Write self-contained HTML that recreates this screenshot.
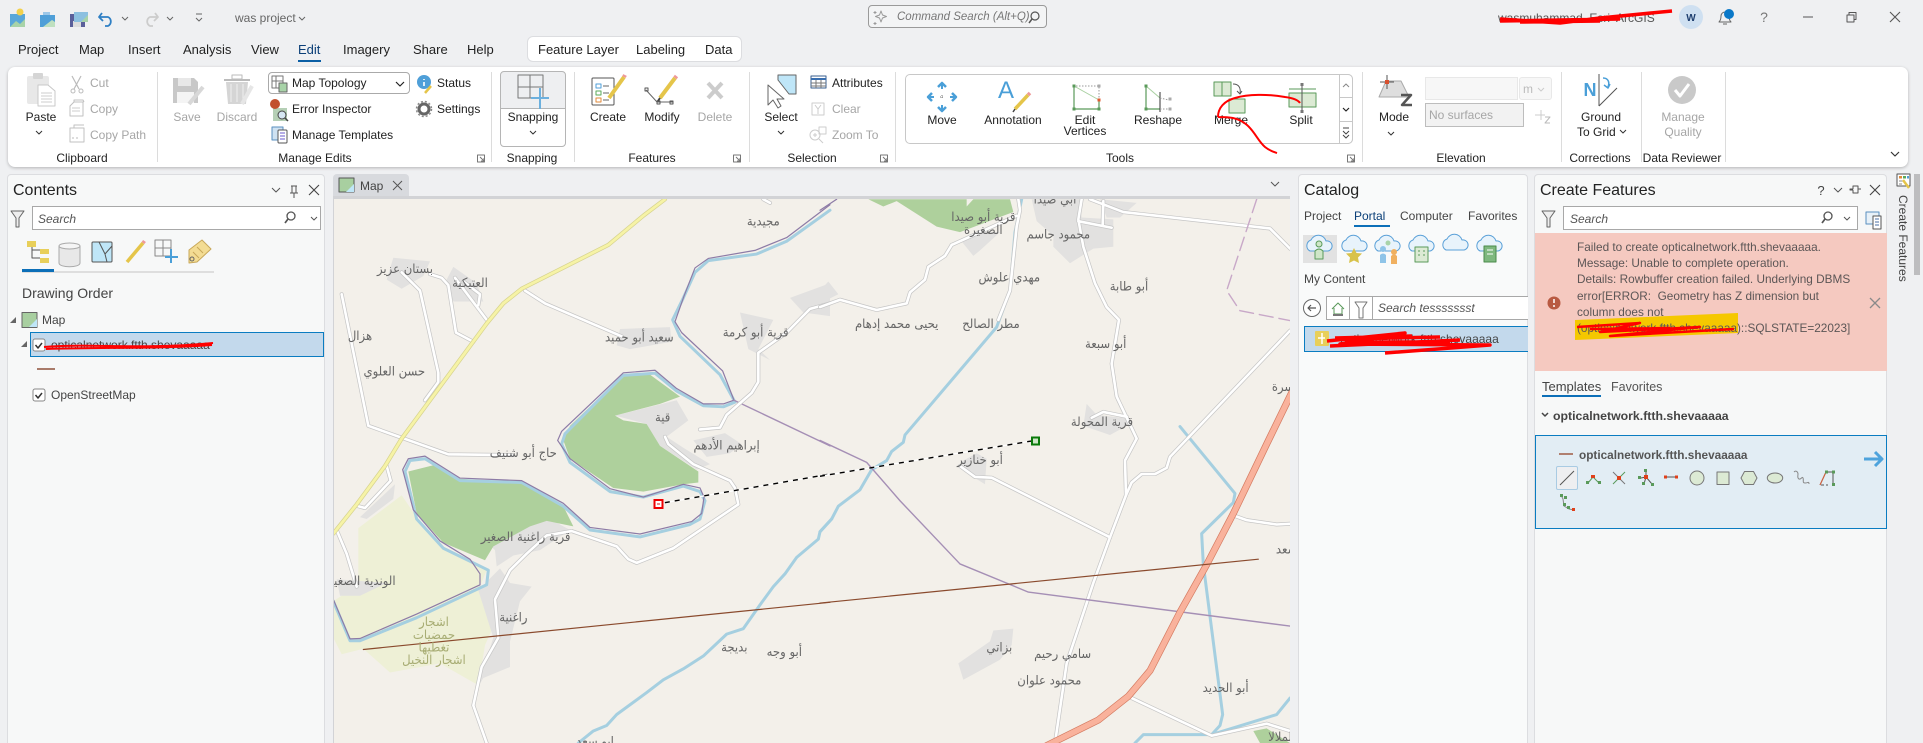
<!DOCTYPE html>
<html><head><meta charset="utf-8"><style>
html,body{margin:0;padding:0;width:1923px;height:743px;overflow:hidden;background:#eff0f2;font-family:"Liberation Sans",sans-serif;font-size:12px;color:#222}
.a{position:absolute;box-sizing:border-box}
.t{position:absolute;line-height:16px;height:16px;white-space:nowrap}
.c{transform:translateX(-50%)}
.g{color:#a6a6a6}
.m{font-size:13px}
.i{font-style:italic;color:#555}
.h{font-size:16px;line-height:20px;height:20px}
.p{position:absolute;box-sizing:border-box;background:#f7f8f8;border:1px solid #dcdde0;border-radius:4px 4px 0 0;border-bottom:0}
.s{position:absolute;width:1px;top:72px;height:90px;background:#dcdcdc}
#map path{vector-effect:non-scaling-stroke;stroke-linejoin:round;stroke-linecap:round}
.lb{font-family:"DejaVu Sans",sans-serif;font-size:35px;fill:#666;text-anchor:middle}
.lg{fill:#a8ad74}
</style></head><body>
<!-- ribbon -->
<div class="a" style="left:8px;top:67px;width:1900px;height:100px;background:#fff;border-radius:7px;box-shadow:0 1px 3px rgba(0,0,0,.25)"></div>
<div class="a" style="left:527px;top:36px;width:215px;height:26px;background:#fff;border:1px solid #dcdde0;border-radius:6px"></div>
<div class="a" style="left:298px;top:60px;width:23px;height:2px;background:#0b5fa5"></div>
<div class="s" style="left:157px"></div><div class="s" style="left:491px"></div><div class="s" style="left:574px"></div><div class="s" style="left:749px"></div><div class="s" style="left:895px"></div><div class="s" style="left:1362px"></div><div class="s" style="left:1561px"></div><div class="s" style="left:1641px"></div><div class="s" style="left:1725px"></div>
<div class="a" style="left:268px;top:72px;width:142px;height:22px;border:1px solid #aaa;border-radius:4px;background:#fff"></div>
<div class="a" style="left:500px;top:71px;width:66px;height:76px;border:1px solid #b5b5b5;border-radius:4px;background:linear-gradient(#eeeff1 0,#eeeff1 36px,#b5b5b5 36px,#b5b5b5 37px,#fff 37px)"></div>
<div class="a" style="left:905px;top:74px;width:448px;height:70px;border:1px solid #c8c8c8;border-radius:5px;background:#fff"></div>
<div class="a" style="left:1339px;top:74px;width:14px;height:70px;border:1px solid #c8c8c8;border-radius:0 5px 5px 0;background:linear-gradient(#fff 22px,#c8c8c8 22px,#c8c8c8 23px,#fff 23px,#fff 46px,#c8c8c8 46px,#c8c8c8 47px,#fff 47px)"></div>
<div class="a" style="left:1425px;top:77px;width:93px;height:23px;background:#f7f7f7;border:1px solid #e8e8e8"></div>
<div class="a" style="left:1519px;top:77px;width:33px;height:23px;background:#f7f7f7;border:1px solid #e8e8e8;border-radius:3px"></div>
<div class="a" style="left:1425px;top:103px;width:99px;height:24px;background:#f2f2f2;border:1px solid #bdbdbd"></div>
<div class="a" style="left:868px;top:5px;width:179px;height:23px;border:1px solid #9a9a9a;border-radius:4px;background:#f3f4f5"></div>
<!-- panels -->
<div class="p" style="left:7px;top:174px;width:318px;height:569px"></div>
<div class="p" style="left:1298px;top:174px;width:230px;height:569px;background:#f9fafa"></div>
<div class="p" style="left:1534px;top:174px;width:353px;height:569px"></div>
<div class="a" style="left:32px;top:206px;width:289px;height:24px;background:#fff;border:1px solid #a8a8a8"></div>
<div class="a" style="left:22px;top:271px;width:192px;height:2px;background:#dedede"></div>
<div class="a" style="left:22px;top:269px;width:32px;height:3px;background:#0c6fb8"></div>
<div class="a" style="left:30px;top:332px;width:294px;height:25px;background:#c3d9ec;border:1px solid #0a7cc1"></div>
<div class="a" style="left:37px;top:368px;width:18px;height:2px;background:#a97b6a"></div>
<!-- map tab -->
<div class="a" style="left:333px;top:174px;width:76px;height:22px;background:#d8dade;border-radius:4px 4px 0 0"></div>
<div class="a" style="left:333px;top:196px;width:957px;height:3px;background:#d2d3d6"></div>
<div class="a" style="left:333px;top:199px;width:957px;height:544px;background:#f3f0ea"></div>
<div class="a" style="left:333px;top:196px;width:1px;height:547px;background:#d2d3d6"></div>
<!-- catalog -->
<div class="a" style="left:1354px;top:225px;width:36px;height:2px;background:#0c6fb8"></div>
<div class="a" style="left:1303px;top:235px;width:34px;height:28px;background:#e2e2e2"></div>
<div class="a" style="left:1326px;top:296px;width:202px;height:24px;background:#fff;border:1px solid #a8a8a8;border-right:0"></div>
<div class="a" style="left:1349px;top:296px;width:1px;height:24px;background:#a8a8a8"></div>
<div class="a" style="left:1372px;top:296px;width:1px;height:24px;background:#a8a8a8"></div>
<div class="a" style="left:1304px;top:326px;width:224px;height:26px;background:#c3d9ec;border:1px solid #0a7cc1;border-right:0"></div>
<!-- create features -->
<div class="a" style="left:1563px;top:206px;width:295px;height:24px;background:#fff;border:1px solid #a8a8a8"></div>
<div class="a" style="left:1535px;top:233px;width:352px;height:138px;background:#f5c9c0"></div>
<div class="a" style="left:1542px;top:395px;width:59px;height:2px;background:#0c6fb8"></div>
<div class="a" style="left:1535px;top:435px;width:352px;height:94px;background:#e2edf4;border:1px solid #0a7cc1"></div>
<div class="a" style="left:1556px;top:466px;width:22px;height:24px;background:#eeeff1;border:1px solid #a9cbe3;border-radius:2px"></div>
<div class="a" style="left:1914px;top:174px;width:6px;height:101px;background:#bdbdbf"></div>

<!-- MAP -->
<svg id="map" class="a" style="left:0;top:0" width="1923" height="743" fill="none">
<defs><clipPath id="mc"><rect x="334" y="199" width="956" height="544"/></clipPath>
<g id="r7">
<path d="M35 340L115 700L355 778L545 780"/><path d="M215 280L270 330L325 555V580L285 630"/><path d="M300 285L335 295L355 315L378 445L430 470"/><path d="M375 295L470 410"/><path d="M400 305L450 340L445 370"/><path d="M585 330L645 365L875 455"/><path d="M170 810L182 850L105 925L85 920"/><path d="M20 985L50 1050L80 1140"/>
<path d="M1500 365L1440 380L1370 445L1285 500V580L1265 610L1190 670L1170 705L1110 710"/>
<path d="M1005 730L1015 750L1090 805L1200 850L1215 870L1225 915L1030 1035L920 1075L895 1065L860 1030L725 988L650 1000L590 1050L540 1095L495 1175L505 1280L455 1360L430 1465L470 1568"/>
<path d="M1300 80L1320 90"/></g>
<g id="r8">
<path d="M595 80L600 110L590 155L570 330L535 410"/><path d="M395 205L590 125"/><path d="M395 205L375 235L325 265L315 300L270 335L260 365L170 383L60 355L0 375"/>
<path d="M785 80L775 135L790 210L825 310L860 375L897 410L875 530L890 620L950 735L915 795L918 890L870 1005L820 1130L740 1350L705 1568"/>
<path d="M775 140L875 158"/><path d="M850 85L848 150"/><path d="M810 80L910 115L1350 160L1410 215"/>
<path d="M420 810L465 840L515 842L870 1005"/><path d="M815 678L850 662L920 675"/>
<path d="M918 890L935 855L965 832H1005L1040 815L1050 785L1410 440"/><path d="M1240 945L1280 958L1370 970L1410 968"/><path d="M935 1445L1175 1548L1340 1515L1410 1535"/></g>
</defs>
<g clip-path="url(#mc)">
<g transform="translate(330,170) scale(.33333,.36545)">
<path fill="#eef0d6" d="M85 980L215 890L260 950L340 1030L470 1095L450 1140L495 1240L465 1300L445 1410L330 1350L180 1375L100 1310L35 1325L10 1280V1180L60 1150L85 1140Z"/>
<g fill="#e2e1e0"><path d="M190 240L300 250L280 290L215 325L170 300Z"/><path d="M370 265L440 310L460 360H370L350 300Z"/><path d="M870 435L1020 430L1025 470L900 490L860 480Z"/><path d="M1230 390L1330 410L1285 490L1320 520L1255 490Z"/><path d="M1380 350L1500 310V400L1420 390Z"/><path d="M855 672L1040 630L1075 685L1010 730L1060 760L1140 805L1100 820L990 755L950 695Z"/><path d="M1090 740L1185 720L1235 750L1200 775L1130 785Z"/><path d="M460 1010L650 950L720 985L630 1040L550 1055L500 1085L495 1040Z"/><path d="M445 1150L510 1090L540 1130L605 1140L570 1180L540 1290V1360L460 1390L440 1420L490 1280Z"/><path d="M20 1120L170 1130L90 1165H30Z"/><path d="M90 950L195 860L190 900L110 955Z"/></g>
<g fill="#aed09c"><path d="M880 560H960L1050 620L990 640L855 672L880 685L950 695L990 755L1105 825V855L1060 860L940 880L850 870L720 790L700 740L720 700Z"/><path d="M235 825L310 808L390 845L575 855L700 920L730 975L650 960L600 975L490 1030L465 1068L340 1020L260 940Z"/></g>
<path stroke="#a5cfe0" stroke-width="3" d="M1500 110L1370 195L1280 230L1135 248L1095 280L1060 350L1028 410L1050 455L1170 560L1215 635L1180 648L1120 645L1040 605L975 556L880 562L705 722L695 750L720 800L840 880L940 895L1060 865L1110 880L1125 905L1110 955L1080 970L930 1004L780 985L700 920L575 855L390 850L285 790L240 795L225 825L260 955L340 1035L475 1095L470 1135L260 1225L90 1288H60L10 1180"/>
<path stroke="#a5cfe0" stroke-width="3" d="M1505 955L1470 990L1465 1010L1400 1060L1365 1105L1330 1140L1290 1190L1240 1255L1190 1270L1120 1330L1060 1365L1000 1395L950 1430L860 1490L830 1520L790 1535L745 1568"/>
<path stroke="#8d7ba6" stroke-width="1.200" d="M1500 95L1370 185L1275 220L1135 242L1095 268L1062 345L1035 415L1055 445L1178 550L1212 630L1180 640L1120 640L1040 598L975 548L880 555L695 715L683 740L720 790L840 872L940 895L1060 860L1110 870L1122 895L1115 940L1085 962L930 996L780 978L700 912L575 850L390 843L285 783L235 790L218 820L250 930L330 1015L420 1065L450 1105V1135L260 1215L90 1282L60 1283L10 1175"/>
<path stroke="#a58fb5" stroke-width="1.400" d="M1212 630L1500 755"/>
<use href="#r7" stroke="#c5c5c5" stroke-width="4"/><use href="#r7" stroke="#fff" stroke-width="2.600"/>
<path stroke="#d6d28e" stroke-width="4.200" d="M1005 80L940 125L835 205L575 325L520 365L470 420L215 735L165 810L80 915L10 995"/>
<path stroke="#f6f3a6" stroke-width="2.800" d="M1005 80L940 125L835 205L575 325L520 365L470 420L215 735L165 810L80 915L10 995"/>
<path stroke="#8a4a2d" stroke-width="1.200" d="M100 1312L1500 1183"/>
<path stroke="#fff" stroke-width="1.400" d="M975 915L1500 832"/><path stroke="#000" stroke-width="1.400" stroke-dasharray="5 5" style="stroke-linecap:butt" d="M975 915L1500 832"/>
<text x="1300" y="152" class="lb">مجيدية</text><text x="225" y="282" class="lb">بستان عزيز</text><text x="420" y="320" class="lb">العتيكية</text><text x="90" y="465" class="lb">هزال</text><text x="193" y="562" class="lb">حسن العلوي</text><text x="928" y="470" class="lb">سعيد أبو حميد</text><text x="1277" y="455" class="lb">قرية أبو كرمة</text><text x="998" y="688" class="lb">قية</text><text x="1190" y="765" class="lb">إبراهيم الأدهم</text><text x="580" y="785" class="lb">حاج أبو شنيف</text><text x="587" y="1015" class="lb">قرية راغنية الصغير</text><text x="95" y="1135" class="lb">الوندية الصغير</text><text x="550" y="1235" class="lb">راغنية</text>
<text x="312" y="1248" class="lb lg">اشجار</text><text x="312" y="1283" class="lb lg">حمضيات</text><text x="312" y="1317" class="lb lg">تغطيها</text><text x="312" y="1352" class="lb lg">اشجار النخيل</text>
<text x="1213" y="1318" class="lb">بديجة</text><text x="1363" y="1330" class="lb">أبو وجه</text><text x="795" y="1575" class="lb">ابو سعد</text>
</g>
<g transform="translate(820,170) scale(.33333,.36545)">
<g fill="#e2e1e0"><path d="M635 80H780L785 130L880 135V210L820 215L750 255L700 210V180L650 140Z"/><path d="M840 80L950 90L900 130H860Z"/><path d="M420 190L490 170H540L480 220L460 235Z"/><path d="M0 330L25 305L55 340L0 365Z"/><path d="M800 640L830 670L925 680L920 700L870 725L790 700Z"/><path d="M420 800L470 775L500 790L495 860L460 840Z"/><path d="M415 1350L510 1290L520 1260L580 1255L575 1300L540 1340L430 1395Z"/></g>
<g fill="#aed09c"><path d="M145 80L190 100L230 85L290 120L350 155L420 170L580 115L570 80H460L440 100V80Z"/><path d="M1300 1535L1340 1528L1410 1568H1320Z"/></g>
<path stroke="#a5cfe0" stroke-width="3" d="M605 80L585 170L570 330L530 430L255 725L250 745L215 770L200 795L155 820L120 875L55 920L35 955L0 990"/>
<path stroke="#a5cfe0" stroke-width="3" d="M1080 702L1245 885L1240 910L1145 995L1150 1080L1208 1490L1200 1520L1175 1545H970L945 1568"/>
<path stroke="#a5cfe0" stroke-width="3" d="M1175 1545L1370 1490L1410 1445"/>
<path stroke="#8d7ba6" stroke-width="1.200" d="M0 110L50 80"/>
<use href="#r8" stroke="#c5c5c5" stroke-width="4"/><use href="#r8" stroke="#fff" stroke-width="2.600"/>
<path stroke="#c8a8c8" stroke-width="1.400" stroke-dasharray="14 6" d="M1310 80L1220 330L1260 385L1410 412"/>
<path stroke="#a58fb5" stroke-width="1.400" d="M0 740L140 800L240 905L420 1078L625 1155L1410 1248"/>
<path stroke="#d47a60" stroke-width="7" d="M1420 600L1340 750L1240 940L1160 1080L1080 1210L990 1370L925 1440L835 1505L680 1575"/>
<path stroke="#f9b29c" stroke-width="5.600" d="M1420 600L1340 750L1240 940L1160 1080L1080 1210L990 1370L925 1440L835 1505L680 1575"/>
<path stroke="#8a4a2d" stroke-width="1.200" d="M0 1185L1315 1065"/>
<path stroke="#fff" stroke-width="1.400" d="M0 838L645 740"/><path stroke="#000" stroke-width="1.400" stroke-dasharray="5 5" style="stroke-linecap:butt" d="M0 838L645 740"/>
<text x="705" y="92" class="lb">أبي صيدا</text><text x="490" y="140" class="lb">قرية أبو صيدا</text><text x="490" y="175" class="lb">الصغيرة</text><text x="715" y="187" class="lb">محمود جاسم</text><text x="568" y="305" class="lb">مهدي علوش</text><text x="927" y="330" class="lb">أبو طابة</text><text x="230" y="432" class="lb">يحيى محمد إدهام</text><text x="513" y="432" class="lb">مطر الصالح</text><text x="857" y="487" class="lb">أبو سبعة</text><text x="846" y="700" class="lb">قرية المحولة</text><text x="480" y="805" class="lb">أبو خنازير</text><text x="538" y="1318" class="lb">بزاتي</text><text x="728" y="1335" class="lb">سامي رحيم</text><text x="688" y="1408" class="lb">محمود علوان</text><text x="1217" y="1428" class="lb">أبو الحديد</text><text x="1395" y="605" class="lb">بسرة</text><text x="1400" y="1050" class="lb">سعد</text><text x="1385" y="1562" class="lb">الملالا</text>
</g>
</g>
<rect x="654.500" y="500" width="8" height="8" fill="#fff" stroke="#e00" stroke-width="2"/><rect x="657" y="503" width="3" height="2" fill="#e88"/>
<rect x="1032" y="437.500" width="7" height="7" fill="#cfe6c8" stroke="#0a7a0a" stroke-width="2"/>
<path d="M1575 320L1738 313V333L1575 340Z" fill="#f5c800"/>
</svg>

<!-- TEXT -->
<span class="t" style="left:235px;top:10px;color:#666">was project</span>
<span class="t m" style="left:18px;top:42px">Project</span><span class="t m" style="left:79px;top:42px">Map</span><span class="t m" style="left:128px;top:42px">Insert</span><span class="t m" style="left:183px;top:42px">Analysis</span><span class="t m" style="left:251px;top:42px">View</span><span class="t m" style="left:298px;top:42px;color:#0b3f78">Edit</span><span class="t m" style="left:343px;top:42px">Imagery</span><span class="t m" style="left:413px;top:42px">Share</span><span class="t m" style="left:467px;top:42px">Help</span>
<span class="t m" style="left:538px;top:42px">Feature Layer</span><span class="t m" style="left:636px;top:42px">Labeling</span><span class="t m" style="left:705px;top:42px">Data</span>
<span class="t i" style="left:897px;top:9px;color:#777;font-size:11.500px">Command Search (Alt+Q)</span>
<span class="t" style="left:1498px;top:10px;color:#555">wasmuhammad&nbsp; Esri&nbsp; ArcGIS</span>

<span class="t c" style="left:41px;top:109px">Paste</span><span class="t g" style="left:90px;top:75px">Cut</span><span class="t g" style="left:90px;top:101px">Copy</span><span class="t g" style="left:90px;top:127px">Copy Path</span><span class="t c" style="left:82px;top:150px">Clipboard</span>
<span class="t c g" style="left:187px;top:109px">Save</span><span class="t c g" style="left:237px;top:109px">Discard</span>
<span class="t" style="left:292px;top:75px">Map Topology</span><span class="t" style="left:292px;top:101px">Error Inspector</span><span class="t" style="left:292px;top:127px">Manage Templates</span><span class="t" style="left:437px;top:75px">Status</span><span class="t" style="left:437px;top:101px">Settings</span><span class="t c" style="left:315px;top:150px">Manage Edits</span>
<span class="t c" style="left:533px;top:109px">Snapping</span><span class="t c" style="left:532px;top:150px">Snapping</span>
<span class="t c" style="left:608px;top:109px">Create</span><span class="t c" style="left:662px;top:109px">Modify</span><span class="t c g" style="left:715px;top:109px">Delete</span><span class="t c" style="left:652px;top:150px">Features</span>
<span class="t c" style="left:781px;top:109px">Select</span><span class="t" style="left:832px;top:75px">Attributes</span><span class="t g" style="left:832px;top:101px">Clear</span><span class="t g" style="left:832px;top:127px">Zoom To</span><span class="t c" style="left:812px;top:150px">Selection</span>
<span class="t c" style="left:942px;top:112px">Move</span><span class="t c" style="left:1013px;top:112px">Annotation</span><span class="t c" style="left:1085px;top:112px">Edit</span><span class="t c" style="left:1085px;top:123px">Vertices</span><span class="t c" style="left:1158px;top:112px">Reshape</span><span class="t c" style="left:1231px;top:112px">Merge</span><span class="t c" style="left:1301px;top:112px">Split</span><span class="t c" style="left:1120px;top:150px">Tools</span>
<span class="t c" style="left:1394px;top:109px">Mode</span><span class="t g" style="left:1523px;top:81px;color:#bbb">m</span><span class="t g" style="left:1429px;top:107px">No surfaces</span><span class="t c" style="left:1461px;top:150px">Elevation</span>
<span class="t c" style="left:1601px;top:109px">Ground</span><span class="t" style="left:1577px;top:124px">To Grid</span><span class="t c" style="left:1600px;top:150px">Corrections</span>
<span class="t c g" style="left:1683px;top:109px">Manage</span><span class="t c g" style="left:1683px;top:124px">Quality</span><span class="t c" style="left:1682px;top:150px">Data Reviewer</span>

<span class="t h" style="left:13px;top:181px">Contents</span><span class="t i" style="left:38px;top:211px">Search</span>
<span class="t" style="left:22px;top:285px;font-size:14px;color:#444">Drawing Order</span>
<span class="t" style="left:42px;top:312px;color:#444">Map</span><span class="t" style="left:51px;top:337px;color:#444">opticalnetwork.ftth.shevaaaaa</span><span class="t" style="left:51px;top:387px;color:#444">OpenStreetMap</span>
<span class="t" style="left:360px;top:178px;color:#444">Map</span>

<span class="t h" style="left:1304px;top:181px">Catalog</span><span class="t" style="left:1304px;top:208px;color:#444">Project</span><span class="t" style="left:1354px;top:208px;color:#0b3f78">Portal</span><span class="t" style="left:1400px;top:208px;color:#444">Computer</span><span class="t" style="left:1468px;top:208px;color:#444">Favorites</span>
<span class="t" style="left:1304px;top:271px;color:#444">My Content</span><span class="t i" style="left:1378px;top:300px">Search tessssssst</span><span class="t" style="left:1340px;top:331px;color:#444">opticalnetwork.ftth.shevaaaaa</span>

<span class="t h" style="left:1540px;top:181px">Create Features</span><span class="t i" style="left:1570px;top:211px">Search</span>
<div class="a" style="left:1577px;top:239px;color:#5c5656;line-height:16.200px;font-size:11.800px;white-space:nowrap">Failed to create opticalnetwork.ftth.shevaaaaa.<br>Message: Unable to complete operation.<br>Details: Rowbuffer creation failed. Underlying DBMS<br>error[ERROR:&nbsp; Geometry has Z dimension but<br>column does not<br>(opticalnetwork.ftth.shevaaaaa)::SQLSTATE=22023]</div>
<span class="t" style="left:1542px;top:379px;font-size:13px;color:#444">Templates</span><span class="t" style="left:1611px;top:379px;font-size:12.500px;color:#555">Favorites</span>
<span class="t" style="left:1553px;top:408px;font-weight:bold;color:#444;font-size:12.300px">opticalnetwork.ftth.shevaaaaa</span>
<span class="t" style="left:1579px;top:447px;font-weight:bold;color:#555;font-size:11.800px">opticalnetwork.ftth.shevaaaaa</span>
<span class="t" style="left:1895px;top:195px;transform-origin:0 0;transform:translate(16px,0) rotate(90deg);color:#444;width:80px">Create Features</span>

<!-- ICONS -->
<svg class="a" style="left:0;top:0;pointer-events:none" width="1923" height="743" fill="none" stroke-linejoin="round">
<!-- QAT -->
<g><rect x="10" y="14" width="15" height="13" fill="#5aa7d9"/><path d="M10 27l6-6 4 3 5-5v8z" fill="#a8d3a8"/><circle cx="20" cy="12" r="3.500" fill="#f3d14c"/>
<path d="M40 15h15v12h-15z" fill="#4f9fd8"/><path d="M43 12h7v3h-7z" fill="#9cc7e8"/><path d="M43 27l9-7 3 2v5z" fill="#bfe0c0"/>
<path d="M70 14h15v13h-15z" fill="#5a5f9a"/><rect x="73" y="21" width="8" height="6" fill="#ddd"/><rect x="74" y="12" width="14" height="10" fill="#8cc0e0"/><path d="M81 22l7-7v7z" fill="#a8d3a8"/></g>
<path d="M102 13l-3 4 4 4M100 17h8a5 5 0 0 1 0 9h-3" stroke="#2e7fc4" stroke-width="1.800"/>
<path d="M155 13l3 4-4 4M157 17h-7a5 5 0 0 0 0 9h3" stroke="#ccc" stroke-width="1.800"/>
<path d="M122 17l3 3 3-3M167 17l3 3 3-3M196 18l3 3 3-3M196 14h6M299 17l3 3 3-3" stroke="#666" stroke-width="1"/>
<!-- search -->
<path d="M881 11l1.500 4 4 1.500-4 1.500-1.500 4-1.500-4-4-1.500 4-1.500z" stroke="#999"/><path d="M875 11v3M873.500 12.500h3M875 22v3M873.500 23.500h3" stroke="#999"/>
<circle cx="1035" cy="16" r="4" stroke="#555" stroke-width="1.200"/><path d="M1032 19l-3 4" stroke="#555" stroke-width="1.500"/>
<!-- top right -->
<path d="M1500 19L1560 23L1600 18L1672 11M1500 21L1560 20L1620 19M1520 22L1600 21" stroke="#f00" stroke-width="3.500"/>
<ellipse cx="1691" cy="17" rx="12" ry="12" fill="#cfe0f1"/><text x="1691" y="21" text-anchor="middle" font-family="Liberation Sans" font-size="10" font-weight="bold" fill="#1f3f6f">W</text>
<path d="M1719 22h12c-2-2-2-4-2-6a4 4 0 0 0-8 0c0 2 0 4-2 6zM1723 24h4" stroke="#666"/><circle cx="1729" cy="14" r="5" fill="#0a78c8"/>
<text x="1764" y="22" text-anchor="middle" font-family="Liberation Sans" font-size="14" fill="#777">?</text>
<path d="M1803 17h10" stroke="#555"/><rect x="1847" y="15" width="7" height="7" stroke="#555"/><path d="M1849 15v-2.500h7v7h-2" stroke="#555"/><path d="M1890 12l10 10M1900 12l-10 10" stroke="#555" stroke-width="1.100"/>
<!-- clipboard -->
<rect x="27" y="76" width="22" height="28" rx="2" fill="#e8e8e8"/><rect x="33" y="73" width="10" height="6" rx="1" fill="#d5d5d5"/><path d="M38 85h10l7 6v15h-17z" fill="#fff" stroke="#c8c8c8"/><path d="M41 93h11M41 96h11M41 99h11M41 102h11" stroke="#ccc"/>
<path d="M72 76l7 13M81 76l-7 13" stroke="#bbb" stroke-width="1.200"/><circle cx="73" cy="91" r="2" stroke="#bbb"/><circle cx="81" cy="91" r="2" stroke="#bbb"/>
<path d="M74 102h9v14h-13v-10zM74 102v-2h9l1 2" stroke="#c0c0c0"/><path d="M72 108h8M72 111h8" stroke="#ccc"/>
<rect x="70" y="128" width="14" height="14" stroke="#c0c0c0"/><path d="M74 128v-3h10" stroke="#c0c0c0"/><path d="M72 138h2M76 138h2" stroke="#bbb"/>
<path d="M36 131l3 3 3-3M530 131l3 3 3-3M778 131l3 3 3-3" stroke="#333"/>
<!-- save discard -->
<path d="M173 78h21l4 4v21h-25z" fill="#c8c8c8"/><rect x="178" y="78" width="13" height="8" fill="#e8e8e8"/><rect x="177" y="92" width="17" height="11" fill="#f4f4f4"/><path d="M203 87l-14 17" stroke="#d8d8d8" stroke-width="4"/>
<path d="M224 80h26" stroke="#bbb" stroke-width="2"/><path d="M226 82h22l-2 22h-18z" fill="#d5d5d5"/><path d="M231 84v18M237 84v18M243 84v18" stroke="#eee"/><rect x="232" y="75" width="10" height="4" stroke="#bbb"/><path d="M252 86l-10 18" stroke="#e6e6e6" stroke-width="4"/>
<!-- topology -->
<path d="M272 76h11v12h-11zM276 76v12M272 81h11" stroke="#777"/><rect x="279" y="83" width="8" height="9" fill="#a8d3a8" stroke="#666"/>
<path d="M396 82l4 4 4-4" stroke="#222" stroke-width="1.200"/>
<rect x="273" y="108" width="14" height="13" fill="#b5cfb5"/><circle cx="275" cy="104" r="5" fill="#c2502e"/><circle cx="282" cy="115" r="4" fill="#d6e6f2" stroke="#444"/><path d="M285 118l3 3" stroke="#444" stroke-width="1.500"/>
<rect x="272" y="127" width="11" height="13" fill="#cfe2f2" stroke="#5a8fbf"/><rect x="278" y="130" width="9" height="13" rx="1" fill="#fff" stroke="#555"/><path d="M280 133h5M280 136h5M280 139h5" stroke="#6a5acd"/>
<circle cx="424" cy="82" r="7" fill="#4f9fd8"/><path d="M424 79v1M424 82v4" stroke="#fff" stroke-width="1.600"/><path d="M431 86l-6 7" stroke="#e5c54a" stroke-width="2.500"/>
<circle cx="424" cy="109" r="5" stroke="#666" stroke-width="3"/><circle cx="424" cy="109" r="7.500" stroke="#888" stroke-width="1.500" stroke-dasharray="2 2"/>
<g stroke="#777"><rect x="477.500" y="155" width="7" height="7"/><path d="M480 157l4 4M484 158v3h-3"/><rect x="733.500" y="155" width="7" height="7"/><path d="M736 157l4 4M740 158v3h-3"/><rect x="880.500" y="155" width="7" height="7"/><path d="M883 157l4 4M887 158v3h-3"/><rect x="1347.500" y="155" width="7" height="7"/><path d="M1350 157l4 4M1354 158v3h-3"/></g>
<!-- snapping -->
<path d="M518 75h25v23h-25zM530 75v23M518 87h25" stroke="#777"/><path d="M540 88v21M531 98h18" stroke="#6cb0de" stroke-width="2"/>
<!-- create/modify/delete -->
<rect x="592" y="78" width="22" height="27" rx="1" fill="#fff" stroke="#555"/><path d="M596 84h5v4h-5z" stroke="#4f9fd8"/><path d="M596 91h5v4h-5z" stroke="#5aa85a"/><path d="M596 98h5v4h-5z" stroke="#e08a3a"/><path d="M603 86h6M603 93h6M603 100h6" stroke="#666"/><path d="M624 77l-15 21" stroke="#e5c54a" stroke-width="4"/><path d="M624 77l1-2" stroke="#e99" stroke-width="4"/>
<path d="M646 90l11 12M657 102h16" stroke="#666"/><rect x="645" y="88" width="3" height="3" stroke="#555"/><rect x="657" y="101" width="3" height="3" stroke="#555"/><rect x="670" y="101" width="3" height="3" stroke="#555"/><path d="M675 78l-15 20" stroke="#e5c54a" stroke-width="4"/><path d="M675 78l1.500-2" stroke="#e99" stroke-width="4"/><path d="M660 98l-2 3" stroke="#444" stroke-width="2"/>
<path d="M708 83l14 15M722 83l-14 15" stroke="#ccc" stroke-width="4"/>
<!-- select -->
<path d="M778 75h18v19l-7 0-11-14z" fill="#bfe6f8" stroke="#666"/><path d="M768 85v20l5-5 5 8 3-2-4-7h7z" fill="#fff" stroke="#666"/>
<rect x="811" y="76" width="15" height="12" fill="#fff" stroke="#3a5f8f"/><path d="M811 79h15" stroke="#3a6fb0" stroke-width="2"/><path d="M811 83h15M811 86h15M816 80v8M821 80v8" stroke="#777"/>
<rect x="812" y="103" width="12" height="12" stroke="#ccc"/><path d="M815 105l3 4 3-4M818 109v5" stroke="#ccc"/>
<circle cx="815" cy="135" r="5" stroke="#ccc"/><path d="M819 139l4 4M813 135h4M815 133v4" stroke="#ccc"/><rect x="819" y="127" width="7" height="7" stroke="#ccc"/>
<!-- move -->
<g stroke="#4a9fd8" stroke-width="2"><path d="M942 83v6M942 105v6M928 97h6M950 97h6"/><path d="M938 87l4-4 4 4M938 107l4 4 4-4M932 93l-4 4 4 4M952 93l4 4-4 4" stroke-width="2.500"/></g><path d="M940 97h4M942 95v4" stroke="#777" stroke-dasharray="1 1"/>
<text x="1006" y="98" text-anchor="middle" font-family="Liberation Sans" font-size="24" fill="#4a9fd8">A</text><path d="M1028 95l-13 14" stroke="#e5c54a" stroke-width="3.500"/><path d="M1028 95l2-2" stroke="#e99" stroke-width="3.500"/><path d="M1015 109l-2 3" stroke="#444" stroke-width="1.500"/>
<!-- edit vertices -->
<path d="M1074 86v23h25v-9" stroke="#5a9a5a" stroke-width="1.200"/><path d="M1074 86l25 14" stroke="#a8d0a0"/><path d="M1076 86h23v12" stroke="#999" stroke-dasharray="1.500 1.500"/><g fill="#5a9a5a"><rect x="1072.500" y="84.500" width="3" height="3"/><rect x="1072.500" y="107.500" width="3" height="3"/><rect x="1097.500" y="107.500" width="3" height="3"/></g><rect x="1097.500" y="98.500" width="3" height="3" fill="#e05a30"/><rect x="1097.500" y="84.500" width="3" height="3" fill="#aaa"/>
<path d="M1146 86v23h14" stroke="#5a9a5a" stroke-width="1.200"/><path d="M1146 86l14 12" stroke="#a8d0a0"/><path d="M1160 92v20" stroke="#333"/><path d="M1160 98l9 2M1160 109h10" stroke="#999" stroke-dasharray="1.500 1.500"/><rect x="1144.500" y="84.500" width="3" height="3" fill="#5a9a5a"/><rect x="1144.500" y="107.500" width="3" height="3" fill="#5a9a5a"/><rect x="1168.500" y="97.500" width="3" height="3" fill="#aaa"/><rect x="1168.500" y="107.500" width="3" height="3" fill="#aaa"/>
<!-- merge split -->
<rect x="1214" y="82" width="17" height="14" fill="#dcead4" stroke="#5a9a5a"/><path d="M1222 82v14" stroke="#5a9a5a"/><rect x="1229" y="99" width="16" height="14" fill="#dcead4" stroke="#5a9a5a"/><path d="M1233 84c6 0 8 4 7 10M1237 91l3 3 2-3" stroke="#555"/>
<path d="M1289 89h27" stroke="#5a9a5a"/><rect x="1289" y="93" width="27" height="14" fill="#dcead4" stroke="#5a9a5a"/><path d="M1302 86v26" stroke="#555"/><rect x="1300.500" y="83" width="3" height="3" fill="#777"/><rect x="1300.500" y="110" width="3" height="3" fill="#777"/>
<!-- red merge scribble -->
<path d="M1218 117C1218 108 1224 101 1235 98C1248 94 1268 94 1285 97C1293 98 1298 100 1300 103M1218 117C1228 117 1238 117 1247 125C1255 132 1258 141 1265 147C1270 151 1274 152 1277 153" stroke="#f00" stroke-width="2"/>
<!-- gallery arrows -->
<path d="M1343 87l3-3 3 3" stroke="#888"/><path d="M1343 108l3 3 3-3" stroke="#222" stroke-width="1.200"/><path d="M1343 131l3 3 3-3M1343 135l3 3 3-3M1343 128h6" stroke="#444"/>
<!-- mode -->
<path d="M1379 97l7-16h15l8 16z" fill="#dedede" stroke="#aaa"/><path d="M1387 75v14M1380 82h14" stroke="#555"/><rect x="1385" y="80" width="4" height="4" fill="#d9502e"/><path d="M1401 95h10l-9 10h10" stroke="#555" stroke-width="2.500"/>
<path d="M1388 132l3 3 3-3" stroke="#333"/>
<path d="M1541 110v10M1535 115h10" stroke="#ccc"/><path d="M1545 117h5l-5 6h5" stroke="#bbb"/>
<path d="M1537 87l3 3 3-3" stroke="#ccc" transform="translate(1 1)"/>
<!-- ground to grid -->
<text x="1590" y="96" text-anchor="middle" font-family="Liberation Sans" font-size="18" font-weight="bold" fill="#4a9fd8">N</text><path d="M1599 74v32M1599 106l18-18" stroke="#555"/><path d="M1603 78c5 0 7 4 5 9M1604 85l4 3 2-4" stroke="#4a9fd8" stroke-width="1.500"/><path d="M1620 130l3 3 3-3" stroke="#333"/>
<circle cx="1682" cy="90" r="14" fill="#c9c9c9"/><path d="M1675 90l5 6 9-12" stroke="#fff" stroke-width="3"/>
<path d="M1891 152l4 4 4-4" stroke="#333" stroke-width="1.200"/>
<!-- contents header -->
<path d="M272 188l4 4 4-4M311 217l3 3 3-3M1271 182l4 4 4-4" stroke="#555"/><path d="M291 186h6M292 186v7M296 186v7M290 193h8M294 193v5" stroke="#555"/><path d="M309 185l10 10M319 185l-10 10" stroke="#444" stroke-width="1.100"/>
<path d="M11 211h13l-5 7v9h-3v-9z" stroke="#666" fill="#eee"/>
<circle cx="291" cy="216" r="4" stroke="#555" stroke-width="1.300"/><path d="M288 219l-3 4" stroke="#555" stroke-width="1.700"/>
<!-- toc tabs -->
<rect x="27" y="241" width="9" height="6" fill="#e8cf5a"/><path d="M32 247v11h8M32 250h8" stroke="#555"/><rect x="40" y="249" width="9" height="5" fill="#e8cf5a"/><rect x="40" y="258" width="9" height="5" fill="#e8cf5a"/>
<path d="M59 246v17c0 5 21 5 21 0v-17" fill="#e8e8e8" stroke="#aaa"/><ellipse cx="69.500" cy="246" rx="10.500" ry="3" fill="#f5f5f5" stroke="#aaa"/>
<rect x="92" y="242" width="20" height="20" rx="1" fill="#bfe6f8" stroke="#555"/><path d="M99 242l6 12 2 8M105 254l7-8" stroke="#555" fill="none"/>
<path d="M143 243l-16 19" stroke="#e5c54a" stroke-width="3.500"/><path d="M143 243l1.500-2" stroke="#e99" stroke-width="3.500"/>
<path d="M155 240h16v16h-16zM163 240v16M155 248h16" stroke="#888"/><path d="M171 249v14M165 257h13" stroke="#4a9fd8" stroke-width="2"/>
<path d="M189 250l13-10 9 9-14 13-8 1z" fill="#f3dc93" stroke="#c8a85a"/><path d="M197 247l6 6M193 252l6 6" stroke="#c8a85a"/><circle cx="192" cy="259" r="2" stroke="#666"/>
<!-- toc rows -->
<path d="M10 323l6-6v6z" fill="#666"/><path d="M21 347l6-6v6z" fill="#666"/>
<rect x="22" y="312.500" width="15" height="15" fill="#a8cfa0" stroke="#666"/><path d="M29 327l8-8v8z" fill="#bfe6f8"/>
<rect x="33" y="339" width="12" height="12" rx="2" fill="#fff" stroke="#888"/><path d="M35.500 345l2.500 3 4-5" stroke="#333" stroke-width="1.500"/>
<rect x="33" y="389" width="12" height="12" rx="2" fill="#fff" stroke="#888"/><path d="M35.500 395l2.500 3 4-5" stroke="#333" stroke-width="1.500"/>
<path d="M44 347C90 343 140 350 213 343M46 349C100 347 160 349 212 345" stroke="#f00" stroke-width="2"/>
<!-- map tab icon -->
<rect x="339" y="178" width="15" height="14" fill="#a8cfa0" stroke="#555"/><path d="M346 192l8-8v8z" fill="#bfe6f8"/>
<path d="M393 181l9 9M402 181l-9 9" stroke="#555"/>
<!-- catalog icons -->
<g stroke="#5aa0d8" fill="#e8f3fb"><path d="M1310 251a6 6 0 0 1 1-11 8 8 0 0 1 15 1 5 5 0 0 1 2 10z"/><path d="M1345 251a6 6 0 0 1 1-11 8 8 0 0 1 15 1 5 5 0 0 1 2 10z"/><path d="M1378 251a6 6 0 0 1 1-11 8 8 0 0 1 15 1 5 5 0 0 1 2 10z"/><path d="M1412 251a6 6 0 0 1 1-11 8 8 0 0 1 15 1 5 5 0 0 1 2 10z"/><path d="M1446 250a6 6 0 0 1 1-11 8 8 0 0 1 15 1 5 5 0 0 1 2 10z"/><path d="M1480 251a6 6 0 0 1 1-11 8 8 0 0 1 15 1 5 5 0 0 1 2 10z"/></g>
<circle cx="1319" cy="244" r="3" fill="#cfe6c8" stroke="#5a9a5a"/><path d="M1315 259v-8q4-4 8 0v8z" fill="#cfe6c8" stroke="#5a9a5a"/>
<path d="M1354 248l2.500 5 5.500.5-4 4 1 5.500-5-2.500-5 2.500 1-5.500-4-4 5.500-.5z" fill="#d8c24a"/>
<circle cx="1383" cy="249" r="3" fill="#8fc4e8"/><path d="M1380 263v-8q3-3 6 0v8z" fill="#8fc4e8"/><circle cx="1394" cy="252" r="3" fill="#f0b060"/><path d="M1391 264v-8q3-3 6 0v8z" fill="#f0b060"/><circle cx="1388" cy="243" r="2.500" fill="#a8d3a8"/>
<rect x="1415" y="247" width="13" height="15" fill="#dcead4" stroke="#5a9a5a"/><path d="M1418 251h2M1423 251h2M1418 255h2M1423 255h2" stroke="#5a9a5a"/>
<rect x="1484" y="246" width="12" height="16" fill="#7fb87f" stroke="#4a8a4a"/><path d="M1487 250h6M1487 254h6" stroke="#fff"/>
<circle cx="1312" cy="308" r="8.500" fill="#fff" stroke="#666"/><path d="M1316 308h-8M1311 305l-3 3 3 3" stroke="#555" stroke-width="1.200"/>
<path d="M1332 309l6-6 6 6M1334 308v6h8v-6" stroke="#5a9a5a"/><path d="M1333 315h10" stroke="#777" stroke-width="2"/>
<path d="M1355 302h12l-4 6v10h-4v-10z" fill="#fff" stroke="#777"/>
<rect x="1315" y="331" width="14" height="15" rx="1" fill="#e8cf5a"/><path d="M1322 333v11M1318 338h7" stroke="#fff" stroke-width="1.500"/>
<path d="M1327 341L1405 333L1340 344L1490 345L1385 353M1335 338L1412 336M1330 346L1460 340M1340 339L1440 337M1345 342L1450 342" stroke="#f00" stroke-width="3.500"/>
<!-- create features head -->
<text x="1821" y="195" text-anchor="middle" font-family="Liberation Sans" font-size="13" fill="#444">?</text><path d="M1834 188l4 4 4-4M1844 217l3 3 3-3" stroke="#555"/><path d="M1853 189v-3h5v7h-5v-3h-3v-1h3M1858 189h3" stroke="#555"/><path d="M1870 185l10 10M1880 185l-10 10" stroke="#444" stroke-width="1.100"/>
<path d="M1542 211h13l-5 7v9h-3v-9z" stroke="#666" fill="#eee"/>
<circle cx="1828" cy="216" r="4" stroke="#555" stroke-width="1.300"/><path d="M1825 219l-3 4" stroke="#555" stroke-width="1.700"/>
<rect x="1866" y="212" width="13" height="12" fill="#e8f1f8" stroke="#5a8fbf"/><rect x="1873" y="216" width="8" height="13" fill="#fff" stroke="#555"/><path d="M1875 219h4M1875 222h4M1875 225h4" stroke="#4a6fa5"/>
<path d="M1577 327L1640 323L1600 332L1700 327L1610 336L1734 329M1590 329L1670 328" stroke="#f00" stroke-width="2.500"/>
<circle cx="1554" cy="303" r="6.500" fill="#b85a42"/><path d="M1554 299v4M1554 305v2" stroke="#fff" stroke-width="1.500"/>
<path d="M1870 298l10 10M1880 298l-10 10" stroke="#8a8a8a" stroke-width="1.300"/>
<path d="M1542 413l3 3 3-3" stroke="#444" stroke-width="1.500"/>
<path d="M1559 454h14" stroke="#b08070" stroke-width="2"/>
<path d="M1864 459h18M1875 452l7 7-7 7" stroke="#4ea3dc" stroke-width="3"/>
<!-- template tools -->
<path d="M1560 485l14-14" stroke="#555"/>
<path d="M1588 483l5-6 6 6" stroke="#5a9a5a"/><rect x="1586" y="481" width="3" height="3" fill="#5a9a5a"/><rect x="1598" y="481" width="3" height="3" fill="#5a9a5a"/><rect x="1591" y="475" width="4" height="3" fill="#e0401a"/>
<path d="M1613 484l12-12" stroke="#5a9a5a"/><path d="M1613 472l12 12" stroke="#777"/><rect x="1617" y="476" width="4" height="4" fill="#e0401a"/>
<path d="M1646 477v-6M1646 477l-5 1M1646 477l-2 7M1646 477l6 7" stroke="#555"/><rect x="1644" y="469" width="3" height="3" fill="#5a9a5a"/><rect x="1638" y="476" width="3" height="3" fill="#5a9a5a"/><rect x="1642" y="482" width="3" height="3" fill="#5a9a5a"/><rect x="1651" y="483" width="3" height="3" fill="#5a9a5a"/><rect x="1644" y="475" width="4" height="4" fill="#e0401a"/>
<path d="M1666 477h10" stroke="#555"/><rect x="1664" y="475.500" width="3" height="3" fill="#e0401a"/><rect x="1675" y="475.500" width="3" height="3" fill="#e0401a"/>
<circle cx="1697" cy="478" r="7" fill="#dcead4" stroke="#777"/><rect x="1717" y="472" width="12" height="12.500" fill="#dcead4" stroke="#777"/><path d="M1741 478l3.500-6.500h9l3.500 6.500-3.500 6.500h-9z" fill="#dcead4" stroke="#777"/><ellipse cx="1775" cy="478" rx="7.700" ry="5" fill="#dcead4" stroke="#777"/>
<path d="M1794 472c2-2 4 0 4 2s-1 4 1 5 3-3 4-1-1 5 2 5 4-2 4 1" stroke="#888"/>
<path d="M1820 485l6-13h7v13" stroke="#555"/><path d="M1820 485l6-13" stroke="#d9603a"/><path d="M1826 485h2M1821 485h3" stroke="#555"/><rect x="1825" y="470.500" width="3" height="3" fill="#5a9a5a"/><rect x="1832" y="470.500" width="3" height="3" fill="#5a9a5a"/><rect x="1832" y="483" width="3" height="3" fill="#5a9a5a"/>
<path d="M1561 495l2 4 1 7 5 3 5 1" stroke="#888"/><rect x="1560" y="494" width="3" height="3" fill="#5a9a5a"/><rect x="1564" y="496" width="3" height="3" fill="#5a9a5a"/><rect x="1563" y="503" width="3" height="3" fill="#5a9a5a"/><rect x="1567" y="506" width="3" height="3" fill="#5a9a5a"/><rect x="1572" y="508" width="3" height="3" fill="#e0401a"/>
<!-- sidebar icon -->
<rect x="1897" y="174" width="13" height="12" fill="#fff" stroke="#555"/><rect x="1899" y="176" width="3" height="2.500" fill="#e08a3a"/><rect x="1903" y="176" width="3" height="2.500" fill="#5aa85a"/><rect x="1907" y="176" width="2" height="2.500" fill="#4f9fd8"/><path d="M1899 181h4M1899 184h3" stroke="#888"/><path d="M1903 180l6 8" stroke="#e5c54a" stroke-width="2.500"/>
</svg>
</body></html>
